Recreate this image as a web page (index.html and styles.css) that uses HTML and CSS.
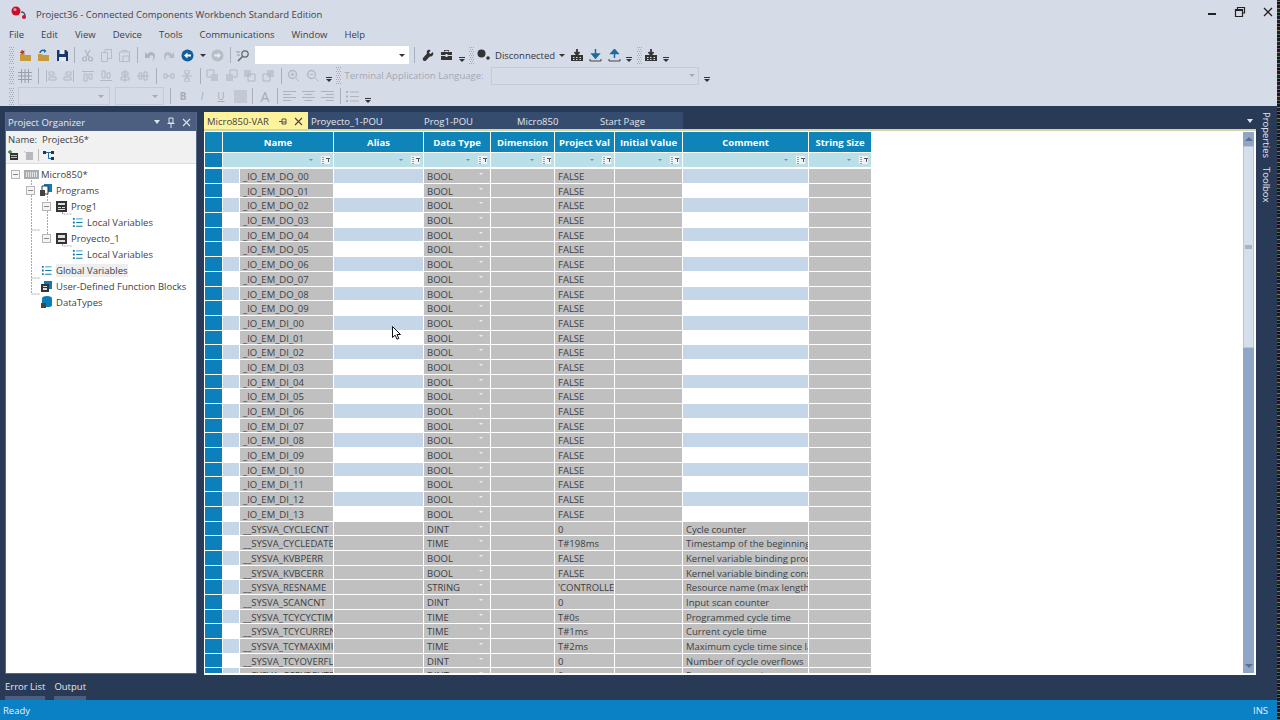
FILE: index.html
```html
<!DOCTYPE html>
<html lang="en">
<head>
<meta charset="utf-8">
<title>Project36 - Connected Components Workbench Standard Edition</title>
<link rel="stylesheet" href="styles.css">
</head>
<body>
<svg class="defs" width="0" height="0">
  <symbol id="i-list" viewBox="0 0 12 12"><path d="M1 1h2v2H1zM1 5h2v2H1zM1 9h2v2H1zM4.500 1.500h7v1h-7zM4.500 5.500h7v1h-7zM4.500 9.500h7v1h-7z" fill="#0c7cb5"/></symbol>
  <symbol id="i-grip" viewBox="0 0 5 19"><path d="M0 1h1v1H0zM2 1h1v1H2zM4 1h1v1H4zM1 3h1v1H1zM3 3h1v1H3zM0 5h1v1H0zM2 5h1v1H2zM4 5h1v1H4zM1 7h1v1H1zM3 7h1v1H3zM0 9h1v1H0zM2 9h1v1H2zM4 9h1v1H4zM1 11h1v1H1zM3 11h1v1H3zM0 13h1v1H0zM2 13h1v1H2zM4 13h1v1H4zM1 15h1v1H1zM3 15h1v1H3zM0 17h1v1H0zM2 17h1v1H2zM4 17h1v1H4z" fill="#a3a9b6"/></symbol>
  <symbol id="i-plc" viewBox="0 0 14 14"><path d="M7 1v5M4.500 4 7 7l2.500-3" fill="none" stroke="#333" stroke-width="1.800"/><path d="M1 7h12v6H1z" fill="#333"/><path d="M3 9h1.500v1H3zM6 9h1.500v1H6zM9.500 9H11v1H9.500zM3 11h1.500v1H3zM6 11h1.500v1H6zM9.500 11H11v1H9.500z" fill="#d6dbe7"/></symbol>
</svg>

<div class="noise"></div>
<div class="app">
  <header class="chrome">
    <div class="titlebar">
      <svg class="logo" width="18" height="16" viewBox="0 0 18 16"><circle cx="6" cy="6" r="4.500" fill="#c8102e"/><circle cx="5" cy="4.500" r="1.500" fill="#f08a90"/><path d="M11 7c3 0 4 2 4 4" fill="none" stroke="#555" stroke-width="1.400"/><circle cx="14" cy="12" r="2" fill="#c8102e"/></svg>
      <span class="title">Project36 - Connected Components Workbench Standard Edition</span>
      <div class="winctl">
        <svg width="12" height="12" viewBox="0 0 12 12"><path d="M2 7h8v2H2z" fill="#222"/></svg>
        <svg width="12" height="12" viewBox="0 0 12 12"><path d="M3.500 3V1.500h7V7H9M1.500 3.500h7v7h-7z" fill="none" stroke="#222" stroke-width="1.200"/><path d="M1.500 3.500h7v1.500h-7z" fill="#222"/></svg>
        <svg width="12" height="12" viewBox="0 0 12 12"><path d="M2 2l8 8M10 2l-8 8" fill="none" stroke="#222" stroke-width="1.300"/></svg>
      </div>
    </div>
    <nav class="menubar">
      <span>File</span><span>Edit</span><span>View</span><span>Device</span><span>Tools</span><span>Communications</span><span>Window</span><span>Help</span>
    </nav>

    <div class="toolbar">
      <svg class="grip" width="5" height="19"><use href="#i-grip"/></svg>
      <span class="btn first"><svg width="13" height="13" viewBox="0 0 13 13"><path d="M1 5h4l1 1h6v6H1z" fill="#c79a3d"/><path d="M3 0.500l1 1.500 1.800-.5-.8 1.700 1 1.500-2-.2-1 1.500-.6-1.800-1.900-.6 1.600-1z" fill="#b5372a"/></svg></span>
      <span class="btn"><svg width="13" height="13" viewBox="0 0 13 13"><path d="M1 5h4l1 1h6v6H1z" fill="#c79a3d"/><path d="M3 4a3 3 0 0 1 5-2" fill="none" stroke="#1c6fa6" stroke-width="1.500"/><path d="M7 0l2.500 2L7 4z" fill="#1c6fa6"/></svg></span>
      <span class="btn"><svg width="13" height="13" viewBox="0 0 13 13"><path d="M1 1h9l2 2v9H1z" fill="#16386b"/><path d="M3.500 1h5v4h-5z" fill="#e6ebf3"/><path d="M3 8h7v4H3z" fill="#e6ebf3"/></svg></span>
      <span class="sep s1"></span>
      <span class="btn"><svg width="13" height="13" viewBox="0 0 13 13"><path d="M4 1l4 7M9 1L5 8" stroke="#aeb3bd" fill="none" stroke-width="1.200"/><circle cx="3.500" cy="10" r="2" stroke="#aeb3bd" fill="none" stroke-width="1.200"/><circle cx="9.500" cy="10" r="2" stroke="#aeb3bd" fill="none" stroke-width="1.200"/></svg></span>
      <span class="btn"><svg width="13" height="13" viewBox="0 0 13 13"><path d="M1.500 3.500h6v9h-6zM5 3.500v-3h6.500v9h-4" stroke="#b7bcc6" fill="none"/></svg></span>
      <span class="btn"><svg width="13" height="13" viewBox="0 0 13 13"><path d="M1.500 3h10v9.500h-10zM4 3V1.500h5V3M5 7h6v5.500H5z" stroke="#b7bcc6" fill="none"/></svg></span>
      <span class="sep s1"></span>
      <span class="btn"><svg width="13" height="13" viewBox="0 0 13 13"><path d="M3 5.500C5 2 11 2 11 7c0 2-1 4-3 5 1-2 2-3 1-5-1-1.500-3-1-4 1l2 1H1V3z" fill="#aeb3bd"/></svg></span>
      <span class="btn"><svg width="13" height="13" viewBox="0 0 13 13"><path d="M10 5.500C8 2 2 2 2 7c0 2 1 4 3 5-1-2-2-3-1-5 1-1.500 3-1 4 1l-2 1h6V3z" fill="#b7bcc6"/></svg></span>
      <span class="btn"><svg width="13" height="13" viewBox="0 0 13 13"><circle cx="6.500" cy="6.500" r="6" fill="#105f9a"/><path d="M3 6.500 6.500 3.500v2H10v2H6.500v2z" fill="#fff"/></svg></span>
      <span class="caret dark back"></span>
      <span class="btn tight"><svg width="13" height="13" viewBox="0 0 13 13"><circle cx="6.500" cy="6.500" r="6" fill="#b7bcc6"/><path d="M10 6.500 6.500 3.500v2H3v2h3.500v2z" fill="#e6e9f0"/></svg></span>
      <span class="sep s2"></span>
      <span class="btn"><svg width="14" height="13" viewBox="0 0 14 13"><circle cx="9" cy="5" r="3.200" fill="none" stroke="#666" stroke-width="1.200"/><path d="M6.500 7.500 2 12" stroke="#666" stroke-width="1.600"/><path d="M0 3h4M1 6h3" stroke="#999"/></svg></span>
      <span class="combo c-find"><span class="caret dark"></span></span>
      <span class="sep s3"></span>
      <span class="btn"><svg width="12" height="13" viewBox="0 0 12 13"><path d="M11 3 8.500 5 7 4l1.500-2.800C6 0 4 2 5 4.500L1 9c-1 2 1 4 3 2.500L7.800 7.500C10 8 12 6 11 3z" fill="#333"/></svg></span>
      <span class="btn"><svg width="13" height="12" viewBox="0 0 13 12"><path d="M4 3V1h5v2M1 3h11v3H1zM1 7h11v4H1z" fill="#333"/><path d="M4.500 1.800h4V3h-4z" fill="#d6dbe7"/><path d="M5.500 5h2v3h-2z" fill="#d6dbe7"/></svg></span>
      <span class="over o1"></span>
      <svg class="grip g2" width="5" height="19"><use href="#i-grip"/></svg>
      <span class="btn conn"><svg width="13" height="12" viewBox="0 0 13 12"><circle cx="4.500" cy="4.500" r="4" fill="#333"/><circle cx="11" cy="9" r="1.800" fill="#333"/></svg></span>
      <span class="disc">Disconnected</span>
      <span class="caret dark mid"></span>
      <span class="btn"><svg width="14" height="14"><use href="#i-plc"/></svg></span>
      <span class="btn"><svg width="13" height="13" viewBox="0 0 13 13"><path d="M6.500 0v8M3 5l3.500 4L10 5z" stroke="#1a6d9c" fill="#1a6d9c" stroke-width="1.500"/><path d="M1 10v2h11v-2" fill="none" stroke="#444"/></svg></span>
      <span class="btn"><svg width="13" height="13" viewBox="0 0 13 13"><path d="M6.500 9V2M3 4.500l3.500-4 3.500 4z" stroke="#1a6d9c" fill="#1a6d9c" stroke-width="1.500"/><path d="M1 10v2h11v-2" fill="none" stroke="#444"/></svg></span>
      <span class="over o4"></span>
      <svg class="grip g3" width="5" height="19"><use href="#i-grip"/></svg>
      <span class="btn"><svg width="14" height="14"><use href="#i-plc"/></svg></span>
      <span class="over o4"></span>
    </div>

    <div class="toolbar">
      <svg class="grip" width="5" height="19"><use href="#i-grip"/></svg>
      <span class="btn first"><svg width="14" height="14" viewBox="0 0 14 14"><path d="M3.500 0v14M7 0v14M10.500 0v14M0 3.500h14M0 7h14M0 10.500h14" stroke="#9aa0ab"/></svg></span>
      <span class="sep s4"></span>
      <span class="btn d"><svg width="12" height="12" viewBox="0 0 12 12"><path d="M1.500 0v12M4 2h5v3H4zM4 7h7v3H4z" fill="none" stroke="#b3b8c3"/></svg></span>
      <span class="btn d"><svg width="12" height="12" viewBox="0 0 12 12"><path d="M10.500 0v12M3 2h5v3H3zM1 7h7v3H1z" fill="none" stroke="#b3b8c3"/></svg></span>
      <span class="btn d"><svg width="12" height="12" viewBox="0 0 12 12"><path d="M0 1.500h12M2 4h3v7H2zM7 4h3v5H7z" fill="none" stroke="#b3b8c3"/></svg></span>
      <span class="btn d"><svg width="12" height="12" viewBox="0 0 12 12"><path d="M0 10.500h12M2 1h3v7H2zM7 3h3v5H7z" fill="none" stroke="#b3b8c3"/></svg></span>
      <span class="btn d"><svg width="12" height="12" viewBox="0 0 12 12"><path d="M6 0v12M3 2h6v3H3zM2 7h8v3H2z" fill="none" stroke="#b3b8c3"/></svg></span>
      <span class="btn d"><svg width="12" height="12" viewBox="0 0 12 12"><path d="M0 6h12M2 3h3v6H2zM7 2h3v8H7z" fill="none" stroke="#b3b8c3"/></svg></span>
      <span class="sep s4"></span>
      <span class="btn d"><svg width="12" height="12" viewBox="0 0 12 12"><path d="M1 4h3v4H1zM8 4h3v4H8zM4 6h4" fill="none" stroke="#b3b8c3"/></svg></span>
      <span class="btn d"><svg width="12" height="12" viewBox="0 0 12 12"><path d="M4 0h4v4H4zM4 8h4v4H4zM6 4v4M1 6h10" fill="none" stroke="#b3b8c3"/></svg></span>
      <span class="sep s4"></span>
      <span class="btn d"><svg width="13" height="13" viewBox="0 0 13 13"><path d="M1 1h7v7H1z" fill="none" stroke="#b3b8c3"/><path d="M5 5h7v7H5z" fill="#c0c5cf"/></svg></span>
      <span class="btn d"><svg width="13" height="13" viewBox="0 0 13 13"><path d="M5 1h7v7H5z" fill="none" stroke="#b3b8c3"/><path d="M1 5h7v7H1z" fill="#c0c5cf"/></svg></span>
      <span class="btn d"><svg width="13" height="13" viewBox="0 0 13 13"><path d="M1 1h7v7H1z" fill="#c0c5cf"/><path d="M5 5h7v7H5z" fill="none" stroke="#b3b8c3"/></svg></span>
      <span class="btn d"><svg width="13" height="13" viewBox="0 0 13 13"><path d="M5 1h7v7H5z" fill="#c0c5cf"/><path d="M1 5h7v7H1z" fill="none" stroke="#b3b8c3"/></svg></span>
      <span class="sep s4"></span>
      <span class="btn d"><svg width="13" height="13" viewBox="0 0 13 13"><circle cx="5.500" cy="5.500" r="4" fill="none" stroke="#b3b8c3" stroke-width="1.300"/><path d="M8.500 8.500 12 12M3.500 5.500h4M5.500 3.500v4" stroke="#b3b8c3"/></svg></span>
      <span class="btn d"><svg width="13" height="13" viewBox="0 0 13 13"><circle cx="5.500" cy="5.500" r="4" fill="none" stroke="#b3b8c3" stroke-width="1.300"/><path d="M8.500 8.500 12 12M3.500 5.500h4" stroke="#b3b8c3"/></svg></span>
      <span class="over o5"></span>
      <svg class="grip g4" width="5" height="19"><use href="#i-grip"/></svg>
      <span class="dim-label">Terminal Application Language:</span>
      <span class="combo c-lang"><span class="caret"></span></span>
      <span class="over o2"></span>
    </div>

    <div class="toolbar">
      <svg class="grip" width="5" height="19"><use href="#i-grip"/></svg>
      <span class="combo c-font"><span class="caret"></span></span>
      <span class="combo c-size"><span class="caret"></span></span>
      <span class="sep s5"></span>
      <span class="glyph b">B</span><span class="glyph i">I</span><span class="glyph u">U</span>
      <span class="glyph"><svg width="13" height="13" viewBox="0 0 13 13"><path d="M0 0h13v13H0z" fill="#c3c8d2"/></svg></span>
      <span class="sep s6"></span>
      <span class="glyph big">A</span>
      <span class="sep s7"></span>
      <span class="glyph"><svg width="13" height="11" viewBox="0 0 13 11"><path d="M0 .5h13M0 3.500h8M0 6.500h13M0 9.500h8" stroke="#aeb3bd"/></svg></span>
      <span class="glyph"><svg width="13" height="11" viewBox="0 0 13 11"><path d="M0 .5h13M2.500 3.500h8M0 6.500h13M2.500 9.500h8" stroke="#aeb3bd"/></svg></span>
      <span class="glyph"><svg width="13" height="11" viewBox="0 0 13 11"><path d="M0 .5h13M5 3.500h8M0 6.500h13M5 9.500h8" stroke="#aeb3bd"/></svg></span>
      <span class="sep s8"></span>
      <span class="glyph"><svg width="13" height="11" viewBox="0 0 13 11"><path d="M0 0h2v2H0zM0 4.500h2v2H0zM0 9h2v2H0zM4 .5h9v1H4zM4 5h9v1H4zM4 9.500h9v1H4z" fill="#aeb3bd"/></svg></span>
      <span class="over o3"></span>
    </div>
  </header>

  <main class="workspace">
    <aside class="organizer">
      <div class="pane-head">
        <span>Project Organizer</span>
        <span class="pane-ctl">
          <span class="tri"></span>
          <svg width="10" height="11" viewBox="0 0 10 11"><path d="M3 1h4v5H3zM1.500 6.500h7M5 6.500V11" fill="none" stroke="#dfe5ef"/></svg>
          <svg width="9" height="9" viewBox="0 0 9 9"><path d="M1 1l7 7M8 1 1 8" stroke="#dfe5ef" stroke-width="1.100"/></svg>
        </span>
      </div>
      <div class="org-name">Name:&nbsp; Project36*</div>
      <div class="org-tools">
        <svg width="11" height="11" viewBox="0 0 11 11"><path d="M2 3h8v7H2z" fill="#333"/><path d="M3 5h6v1H3zM3 7h6v1H3z" fill="#bbb"/><path d="M2 0v4M0 2h4" stroke="#2b8a3e" stroke-width="1.300"/></svg>
        <svg width="11" height="11" viewBox="0 0 11 11"><path d="M3 2h7v8H3z" fill="#b5b8bd"/><path d="M1 1l3 3" stroke="#c5c8cd"/></svg>
        <span class="org-sep"></span>
        <svg width="11" height="11" viewBox="0 0 11 11"><path d="M0 1h3v3H0zM8 1h3v3H8zM8 7h3v3H8z" fill="#333"/><path d="M3 2.500h5M5.500 2.500v6h2.500" stroke="#1c6fa6" fill="none"/></svg>
      </div>
      <div class="tree">
        <svg class="tree-lines" width="70" height="140" viewBox="0 0 70 140"><path d="M20.500 8v120M20.500 64h9M20.500 112h9M20.500 128h9M36.500 24v52M51.500 40v8h9M51.500 72v8h9" fill="none" stroke="#a8a8a8" stroke-dasharray="2 1"/></svg>
        <div class="node l0"><span class="exp"></span><svg class="ni wide" width="15" height="9" viewBox="0 0 15 9"><path d="M0 0h15v9H0z" fill="#a9adb2"/><path d="M2 2h1v5H2zM4 2h1v5H4zM6 2h1v5H6zM8 2h1v5H8zM10 2h1v5h-1zM12 2h1v5h-1z" fill="#e3e5e8"/></svg><span>Micro850*</span></div>
        <div class="node l1"><span class="exp"></span><svg class="ni" width="12" height="12" viewBox="0 0 12 12"><path d="M4 0h8v8H4z" fill="#0c7cb5"/><path d="M2 2h6v8H2z" fill="#fff" stroke="#333"/><path d="M0 6h5v6H0z" fill="#444"/></svg><span>Programs</span></div>
        <div class="node l2"><span class="exp"></span><svg class="ni" width="11" height="11" viewBox="0 0 11 11"><path d="M0 0h11v11H0z" fill="#333"/><path d="M2 2h7v2H2zM2 6h3v1H2zM6 6h3v1H6zM2 8h7v1H2z" fill="#ddd"/></svg><span>Prog1</span></div>
        <div class="node l3"><svg class="ni" width="11" height="11"><use href="#i-list"/></svg><span>Local Variables</span></div>
        <div class="node l2"><span class="exp"></span><svg class="ni" width="11" height="11" viewBox="0 0 11 11"><path d="M0 0h11v11H0z" fill="#333"/><path d="M2 2h7v3H2zM2 7h7v2H2z" fill="#ddd"/></svg><span>Proyecto_1</span></div>
        <div class="node l3"><svg class="ni" width="11" height="11"><use href="#i-list"/></svg><span>Local Variables</span></div>
        <div class="node l1n"><svg class="ni" width="11" height="11"><use href="#i-list"/></svg><span class="hl">Global Variables</span></div>
        <div class="node l1n"><svg class="ni" width="11" height="11" viewBox="0 0 11 11"><path d="M3 0h8v8H3z" fill="#0c7cb5"/><path d="M0 3h8v8H0z" fill="#333"/><path d="M2 5h4v1H2zM2 7h4v2H2z" fill="#ddd"/></svg><span>User-Defined Function Blocks</span></div>
        <div class="node l1n"><svg class="ni" width="11" height="12" viewBox="0 0 11 12"><ellipse cx="6" cy="2.500" rx="5" ry="2.500" fill="#0c7cb5"/><path d="M1 2.500v7c0 2 10 2 10 0v-7c0 2-10 2-10 0z" fill="#0c7cb5"/><path d="M0 7h5v5H0z" fill="#444"/></svg><span>DataTypes</span></div>
      </div>
    </aside>

    <section class="docs">
      <div class="tabs">
        <div class="tab active"><span>Micro850-VAR</span>
          <svg width="10" height="9" viewBox="0 0 10 9"><path d="M1 4.500h3M4 2h4v5H4zM4 5h4" fill="none" stroke="#555"/></svg>
          <svg width="9" height="9" viewBox="0 0 9 9"><path d="M1 1l7 7M8 1 1 8" stroke="#444" stroke-width="1.100"/></svg>
        </div>
        <div class="tabgroup">
          <span class="t1">Proyecto_1-POU</span><span class="t2">Prog1-POU</span><span class="t3">Micro850</span><span>Start Page</span>
        </div>
        <span class="tab-menu"></span>
      </div>
      <div class="doc">
        <div class="sheet">
          <div class="grid-wrap">
            <div class="row head"><div class="sel"></div><div class="hname">Name</div><div>Alias</div><div>Data Type</div><div>Dimension</div><div>Project Val</div><div>Initial Value</div><div>Comment</div><div>String Size</div></div>
            <div class="row filter"><div class="sel"></div><div class="hname"><i></i><b></b></div><div><i></i><b></b></div><div><i></i><b></b></div><div><i></i><b></b></div><div><i></i><b></b></div><div><i></i><b></b></div><div><i></i><b></b></div><div><i></i><b></b></div></div>

            <div class="row b"><div class="sel"></div><div class="mk"></div><div class="g">_IO_EM_DO_00</div><div class="e"></div><div class="g t">BOOL</div><div class="g"></div><div class="g">FALSE</div><div class="g"></div><div class="e"></div><div class="g"></div></div>
            <div class="row w"><div class="sel"></div><div class="mk"></div><div class="g">_IO_EM_DO_01</div><div class="e"></div><div class="g t">BOOL</div><div class="g"></div><div class="g">FALSE</div><div class="g"></div><div class="e"></div><div class="g"></div></div>
            <div class="row b"><div class="sel"></div><div class="mk"></div><div class="g">_IO_EM_DO_02</div><div class="e"></div><div class="g t">BOOL</div><div class="g"></div><div class="g">FALSE</div><div class="g"></div><div class="e"></div><div class="g"></div></div>
            <div class="row w"><div class="sel"></div><div class="mk"></div><div class="g">_IO_EM_DO_03</div><div class="e"></div><div class="g t">BOOL</div><div class="g"></div><div class="g">FALSE</div><div class="g"></div><div class="e"></div><div class="g"></div></div>
            <div class="row b"><div class="sel"></div><div class="mk"></div><div class="g">_IO_EM_DO_04</div><div class="e"></div><div class="g t">BOOL</div><div class="g"></div><div class="g">FALSE</div><div class="g"></div><div class="e"></div><div class="g"></div></div>
            <div class="row w"><div class="sel"></div><div class="mk"></div><div class="g">_IO_EM_DO_05</div><div class="e"></div><div class="g t">BOOL</div><div class="g"></div><div class="g">FALSE</div><div class="g"></div><div class="e"></div><div class="g"></div></div>
            <div class="row b"><div class="sel"></div><div class="mk"></div><div class="g">_IO_EM_DO_06</div><div class="e"></div><div class="g t">BOOL</div><div class="g"></div><div class="g">FALSE</div><div class="g"></div><div class="e"></div><div class="g"></div></div>
            <div class="row w"><div class="sel"></div><div class="mk"></div><div class="g">_IO_EM_DO_07</div><div class="e"></div><div class="g t">BOOL</div><div class="g"></div><div class="g">FALSE</div><div class="g"></div><div class="e"></div><div class="g"></div></div>
            <div class="row b"><div class="sel"></div><div class="mk"></div><div class="g">_IO_EM_DO_08</div><div class="e"></div><div class="g t">BOOL</div><div class="g"></div><div class="g">FALSE</div><div class="g"></div><div class="e"></div><div class="g"></div></div>
            <div class="row w"><div class="sel"></div><div class="mk"></div><div class="g">_IO_EM_DO_09</div><div class="e"></div><div class="g t">BOOL</div><div class="g"></div><div class="g">FALSE</div><div class="g"></div><div class="e"></div><div class="g"></div></div>
            <div class="row b"><div class="sel"></div><div class="mk"></div><div class="g">_IO_EM_DI_00</div><div class="e"></div><div class="g t">BOOL</div><div class="g"></div><div class="g">FALSE</div><div class="g"></div><div class="e"></div><div class="g"></div></div>
            <div class="row w"><div class="sel"></div><div class="mk"></div><div class="g">_IO_EM_DI_01</div><div class="e"></div><div class="g t">BOOL</div><div class="g"></div><div class="g">FALSE</div><div class="g"></div><div class="e"></div><div class="g"></div></div>
            <div class="row b"><div class="sel"></div><div class="mk"></div><div class="g">_IO_EM_DI_02</div><div class="e"></div><div class="g t">BOOL</div><div class="g"></div><div class="g">FALSE</div><div class="g"></div><div class="e"></div><div class="g"></div></div>
            <div class="row w"><div class="sel"></div><div class="mk"></div><div class="g">_IO_EM_DI_03</div><div class="e"></div><div class="g t">BOOL</div><div class="g"></div><div class="g">FALSE</div><div class="g"></div><div class="e"></div><div class="g"></div></div>
            <div class="row b"><div class="sel"></div><div class="mk"></div><div class="g">_IO_EM_DI_04</div><div class="e"></div><div class="g t">BOOL</div><div class="g"></div><div class="g">FALSE</div><div class="g"></div><div class="e"></div><div class="g"></div></div>
            <div class="row w"><div class="sel"></div><div class="mk"></div><div class="g">_IO_EM_DI_05</div><div class="e"></div><div class="g t">BOOL</div><div class="g"></div><div class="g">FALSE</div><div class="g"></div><div class="e"></div><div class="g"></div></div>
            <div class="row b"><div class="sel"></div><div class="mk"></div><div class="g">_IO_EM_DI_06</div><div class="e"></div><div class="g t">BOOL</div><div class="g"></div><div class="g">FALSE</div><div class="g"></div><div class="e"></div><div class="g"></div></div>
            <div class="row w"><div class="sel"></div><div class="mk"></div><div class="g">_IO_EM_DI_07</div><div class="e"></div><div class="g t">BOOL</div><div class="g"></div><div class="g">FALSE</div><div class="g"></div><div class="e"></div><div class="g"></div></div>
            <div class="row b"><div class="sel"></div><div class="mk"></div><div class="g">_IO_EM_DI_08</div><div class="e"></div><div class="g t">BOOL</div><div class="g"></div><div class="g">FALSE</div><div class="g"></div><div class="e"></div><div class="g"></div></div>
            <div class="row w"><div class="sel"></div><div class="mk"></div><div class="g">_IO_EM_DI_09</div><div class="e"></div><div class="g t">BOOL</div><div class="g"></div><div class="g">FALSE</div><div class="g"></div><div class="e"></div><div class="g"></div></div>
            <div class="row b"><div class="sel"></div><div class="mk"></div><div class="g">_IO_EM_DI_10</div><div class="e"></div><div class="g t">BOOL</div><div class="g"></div><div class="g">FALSE</div><div class="g"></div><div class="e"></div><div class="g"></div></div>
            <div class="row w"><div class="sel"></div><div class="mk"></div><div class="g">_IO_EM_DI_11</div><div class="e"></div><div class="g t">BOOL</div><div class="g"></div><div class="g">FALSE</div><div class="g"></div><div class="e"></div><div class="g"></div></div>
            <div class="row b"><div class="sel"></div><div class="mk"></div><div class="g">_IO_EM_DI_12</div><div class="e"></div><div class="g t">BOOL</div><div class="g"></div><div class="g">FALSE</div><div class="g"></div><div class="e"></div><div class="g"></div></div>
            <div class="row w"><div class="sel"></div><div class="mk"></div><div class="g">_IO_EM_DI_13</div><div class="e"></div><div class="g t">BOOL</div><div class="g"></div><div class="g">FALSE</div><div class="g"></div><div class="e"></div><div class="g"></div></div>
            <div class="row b"><div class="sel"></div><div class="mk"></div><div class="g">__SYSVA_CYCLECNT</div><div class="g"></div><div class="g t">DINT</div><div class="g"></div><div class="g">0</div><div class="g"></div><div class="g">Cycle counter</div><div class="g"></div></div>
            <div class="row w"><div class="sel"></div><div class="mk"></div><div class="g">__SYSVA_CYCLEDATE</div><div class="g"></div><div class="g t">TIME</div><div class="g"></div><div class="g">T#198ms</div><div class="g"></div><div class="g">Timestamp of the beginning</div><div class="g"></div></div>
            <div class="row b"><div class="sel"></div><div class="mk"></div><div class="g">__SYSVA_KVBPERR</div><div class="g"></div><div class="g t">BOOL</div><div class="g"></div><div class="g">FALSE</div><div class="g"></div><div class="g">Kernel variable binding process</div><div class="g"></div></div>
            <div class="row w"><div class="sel"></div><div class="mk"></div><div class="g">__SYSVA_KVBCERR</div><div class="g"></div><div class="g t">BOOL</div><div class="g"></div><div class="g">FALSE</div><div class="g"></div><div class="g">Kernel variable binding consumer</div><div class="g"></div></div>
            <div class="row b"><div class="sel"></div><div class="mk"></div><div class="g">__SYSVA_RESNAME</div><div class="g"></div><div class="g t">STRING</div><div class="g"></div><div class="g">'CONTROLLER'</div><div class="g"></div><div class="g">Resource name (max length)</div><div class="g"></div></div>
            <div class="row w"><div class="sel"></div><div class="mk"></div><div class="g">__SYSVA_SCANCNT</div><div class="g"></div><div class="g t">DINT</div><div class="g"></div><div class="g">0</div><div class="g"></div><div class="g">Input scan counter</div><div class="g"></div></div>
            <div class="row b"><div class="sel"></div><div class="mk"></div><div class="g">__SYSVA_TCYCYCTIME</div><div class="g"></div><div class="g t">TIME</div><div class="g"></div><div class="g">T#0s</div><div class="g"></div><div class="g">Programmed cycle time</div><div class="g"></div></div>
            <div class="row w"><div class="sel"></div><div class="mk"></div><div class="g">__SYSVA_TCYCURRENT</div><div class="g"></div><div class="g t">TIME</div><div class="g"></div><div class="g">T#1ms</div><div class="g"></div><div class="g">Current cycle time</div><div class="g"></div></div>
            <div class="row b"><div class="sel"></div><div class="mk"></div><div class="g">__SYSVA_TCYMAXIMUM</div><div class="g"></div><div class="g t">TIME</div><div class="g"></div><div class="g">T#2ms</div><div class="g"></div><div class="g">Maximum cycle time since last</div><div class="g"></div></div>
            <div class="row w"><div class="sel"></div><div class="mk"></div><div class="g">__SYSVA_TCYOVERFLOW</div><div class="g"></div><div class="g t">DINT</div><div class="g"></div><div class="g">0</div><div class="g"></div><div class="g">Number of cycle overflows</div><div class="g"></div></div>
            <div class="row b"><div class="sel"></div><div class="mk"></div><div class="g">__SYSVA_CCEXECUTE</div><div class="g"></div><div class="g t">DINT</div><div class="g"></div><div class="g">0</div><div class="g"></div><div class="g">Power-up execution</div><div class="g"></div></div>
          </div>
          <div class="vscroll">
            <div class="sb-btn"><span class="up"></span></div>
            <div class="sb-thumb"></div>
            <div class="sb-track"></div>
            <div class="sb-btn"><span class="down"></span></div>
          </div>
        </div>
      </div>
    </section>

    <aside class="siderail"><span>Properties</span><span>Toolbox</span></aside>
  </main>

  <div class="bottom-tabs"><span class="bt">Error List</span><span class="bt">Output</span></div>
  <footer class="status"><span>Ready</span><span>INS</span></footer>
</div>
<svg class="cursor" width="9" height="14" viewBox="0 0 9 14"><path d="M.5.500v11l2.700-2.300 1.800 4 1.800-.8-1.800-3.900H8.500z" fill="#fff" stroke="#111"/></svg>
</body>
</html>
```
FILE: styles.css
```css
* { box-sizing: border-box; }
html, body { margin: 0; height: 100%; overflow: hidden; }
body { font-family: "Open Sans", "Noto Sans", "Liberation Sans", sans-serif; font-size: 9.500px; color: #3c3f45; background: #293a56; }
.defs { position: absolute; }
.noise { position: absolute; top: 0; right: 0; width: 3px; height: 720px; z-index: 5;
  background:
    repeating-linear-gradient(0deg, #6b4a6e 0 1px, #111 1px 3px, #3f7a5c 3px 4px, #222 4px 7px, #8a7a3c 7px 8px, #1a1a2a 8px 11px);
}
.app { width: 1277px; height: 720px; display: flex; flex-direction: column; }

/* Top chrome */
.chrome { height: 106px; background: #d6dbe8; display: flex; flex-direction: column; flex: none; }
.titlebar { height: 28px; display: flex; align-items: center; padding-left: 10px; flex: none; }
.logo { margin-top: -3px; }
.title { margin-left: 8px; color: #3f434a; }
.winctl { margin-left: auto; display: flex; gap: 16px; padding-right: 3px; margin-top: -4px; }
.menubar { height: 18px; display: flex; align-items: center; padding-left: 9px; flex: none; margin-top: -3px; }
.menubar span { margin-right: 17px; }
.toolbar { height: 20.500px; display: flex; align-items: center; padding-left: 9px; flex: none; }
.menubar + .toolbar { margin-top: 2px; }
.grip { flex: none; }
.btn { width: 18.500px; height: 19px; display: flex; align-items: center; justify-content: center; flex: none; }
.btn.first { margin-left: 2px; }
.btn.tight { margin-left: 2.750px; }
.sep { width: 1px; height: 16px; background: #a9afbb; flex: none; }
.s1 { margin: 0 3.500px 0 2.500px; }
.s2 { margin: 0 2.500px 0 3px; }
.s3 { margin: 0 3.750px 0 5px; }
.s4 { margin: 0 3px; }
.s5 { margin: 0 2.500px 0 6px; }
.s6 { margin: 0 5px 0 2.500px; }
.s7 { margin: 0 1.500px 0 5px; }
.s8 { margin: 0 1.500px 0 3.500px; }
.caret { width: 0; height: 0; border-left: 3px solid transparent; border-right: 3px solid transparent; border-top: 3px solid #a6abb5; flex: none; }
.caret.dark { border-top-color: #333; }
.caret.back { margin-left: 3px; }
.caret.mid { margin: 0 3px 0 4px; }
.over { width: 9px; height: 19px; position: relative; flex: none; }
.over::before { content: ""; position: absolute; left: 1px; bottom: 3px; width: 0; height: 0; border-left: 3px solid transparent; border-right: 3px solid transparent; border-top: 3px solid #333; }
.over::after { content: ""; position: absolute; left: 1px; bottom: 7px; width: 6px; height: 1px; background: #333; }
.o1 { margin-left: 2px; }
.o2 { margin-left: 4px; }
.o3 { margin-left: 2.500px; }
.o4 { margin-left: 1.500px; }
.o5 { margin-left: 3px; }
.g2 { margin-left: 2px; }
.g3 { margin-left: 3px; }
.g4 { margin-left: 2px; }
.conn { margin-left: 1px; }
.disc { width: 60px; margin-left: 2px; color: #33373e; white-space: nowrap; }
.combo { height: 18px; display: flex; align-items: center; justify-content: flex-end; padding-right: 3px; flex: none; border: 1px solid #c6cbd6; }
.c-find { width: 154px; background: #fff; border-color: #fff; margin-left: 3px; }
.c-lang { width: 208px; margin-left: 5px; background: #d6dbe8; }
.c-font { width: 92px; margin-left: 4px; padding-right: 5px; }
.c-size { width: 49px; margin-left: 5px; padding-right: 5px; }
.dim-label { width: 141px; color: #a3a8b3; margin-left: 4px; white-space: nowrap; }
.glyph { width: 19px; display: flex; align-items: center; justify-content: center; color: #a6abb5; font-size: 10px; flex: none; }
.glyph.b { font-weight: 700; }
.glyph.i { font-style: italic; }
.glyph.u { text-decoration: underline; }
.glyph.big { font-size: 14px; width: 14px; }

/* Workspace */
.workspace { height: 568px; display: flex; flex: none; padding-top: 6px; padding-left: 5px; }
.organizer { width: 192px; height: 562px; background: #fff; display: flex; flex-direction: column; flex: none; border: 1px solid #56698c; border-top: 0; }
.pane-head { height: 19px; background: #4c5f80; color: #e6eaf2; display: flex; align-items: center; justify-content: space-between; padding: 1px 5px 0 2px; flex: none; }
.pane-ctl { display: flex; align-items: center; gap: 6px; }
.tri { width: 0; height: 0; border-left: 3.500px solid transparent; border-right: 3.500px solid transparent; border-top: 4px solid #dfe5ef; }
.org-name { height: 16px; background: #f1f1f1; padding-left: 2px; display: flex; align-items: center; color: #3c3f45; flex: none; }
.org-tools { height: 17px; background: #f1f1f1; border-bottom: 1px solid #dcdcdc; padding-left: 2px; display: flex; align-items: center; gap: 4px; flex: none; }
.org-sep { width: 1px; height: 12px; background: #bbb; }
.tree { position: relative; padding-top: 2px; flex: 1; }
.tree-lines { position: absolute; left: 5px; top: 2px; }
.node { position: relative; height: 16px; display: flex; align-items: center; white-space: nowrap; color: #3c3f45; }
.l0 { padding-left: 5px; }
.l1 { padding-left: 20px; }
.l1n { padding-left: 34px; }
.l2 { padding-left: 36px; }
.l3 { padding-left: 65px; }
.exp { width: 9px; height: 9px; border: 1px solid #b5b5b5; background: #f4f4f4 linear-gradient(#888, #888) center / 5px 1px no-repeat; flex: none; margin-right: 4px; }
.ni { flex: none; margin: 0 4px 0 1px; }
.wide { margin: 0 2px 0 0; }
.hl { background: #eeeeee; }

/* Documents */
.docs { width: 1052px; margin-left: 7px; display: flex; flex-direction: column; flex: none; }
.tabs { height: 19px; display: flex; align-items: stretch; position: relative; flex: none; border-bottom: 2px solid #d4d4a4; }
.tab.active { width: 104px; background: #fff29d; color: #3c3f45; display: flex; align-items: center; padding: 1px 0 0 3px; gap: 6px; }
.tab.active span { width: 65px; white-space: nowrap; }
.tabgroup { width: 375px; background: #364c6e; color: #e2e7ef; display: flex; align-items: center; padding: 1px 0 0 3px; white-space: nowrap; }
.t1 { width: 113px; }
.t2 { width: 93px; }
.t3 { width: 83px; }
.tab-menu { margin-left: auto; margin-right: 3px; align-self: center; width: 0; height: 0; border-left: 3.500px solid transparent; border-right: 3.500px solid transparent; border-top: 4px solid #dfe5ef; }
.doc { height: 544px; background: #fff; padding: 1px 2px 2px 1px; flex: none; }
.sheet { height: 100%; display: flex; justify-content: space-between; }
.grid-wrap { width: 667px; overflow: hidden; height: 541px; }
.row { display: grid; grid-template-columns: 17px 16px 93px 89px 66px 63px 59px 67px 125px 62px; column-gap: 1px; height: 13.700px; margin-bottom: 1px; line-height: 16px; white-space: nowrap; }
.row > div { overflow: hidden; min-width: 0; position: relative; }
.row.head, .row.filter { grid-template-columns: 17px 110px 89px 66px 63px 59px 67px 125px 62px; }
.row.head { height: 20px; line-height: 22px; margin-bottom: 1px; font-weight: 700; color: #fff; text-align: center; }
.row.head > div { background: #0e84b9; }
.row.filter { height: 14px; margin-bottom: 2px; }
.row.filter > div { background: #b9dfe9; }
.sel { background: #0b80bb; }
.row.filter > .sel { background: #0b80bb; }
.row.filter i { position: absolute; right: 20px; top: 6px; width: 0; height: 0; border-left: 2px solid transparent; border-right: 2px solid transparent; border-top: 2px solid #7f8c96; }
.row.filter b { position: absolute; right: 2px; top: 2px; width: 11px; height: 10px; background-color: #e9f5f8; background-image: linear-gradient(#555, #555), linear-gradient(#555, #555), repeating-linear-gradient(#9aa0a6 0 1px, transparent 1px 2px); background-size: 4px 1px, 1px 4px, 2px 7px; background-position: 5px 2px, 6.500px 2px, 1px 1px; background-repeat: no-repeat; border: 1px solid #c9dde3; }
.g { background: #c0c0c0; padding-left: 3px; color: #3d3f44; }
.row.b .mk, .row.b .e { background: #c5d6e9; }
.row.w .mk, .row.w .e { background: #fff; }
.t::after { content: ""; position: absolute; right: 7px; top: 4px; width: 0; height: 0; border-left: 2px solid transparent; border-right: 2px solid transparent; border-top: 2px solid #ececec; }
.vscroll { width: 11px; display: flex; flex-direction: column; flex: none; height: 541px; }
.sb-btn { height: 14px; background: #8fa6c8; display: flex; align-items: center; justify-content: center; flex: none; }
.up { border-left: 4px solid transparent; border-right: 4px solid transparent; border-bottom: 4px solid #5b6f8e; }
.down { border-left: 4px solid transparent; border-right: 4px solid transparent; border-top: 4px solid #5b6f8e; }
.sb-thumb { height: 202px; background: #d5deeb linear-gradient(#a9b2bf, #a9b2bf) center / 7px 4px no-repeat; border: 1px solid #bcc4d0; flex: none; }
.sb-track { flex: 1; background: #8fa6c8; }
.siderail { width: 21px; display: flex; flex-direction: column; align-items: center; gap: 9px; color: #e2e7ef; flex: none; }
.siderail span { writing-mode: vertical-rl; }

/* Bottom */
.bottom-tabs { height: 26px; display: flex; padding-left: 5px; gap: 9px; color: #e2e7ef; flex: none; padding-top: 6px; }
.bt { height: 20px; border-bottom: 4px solid #4c5f80; }
.status { height: 20px; background: #0a80c5; color: #e6f2fa; display: flex; align-items: center; justify-content: space-between; padding: 1px 9px 0 3px; flex: none; }
.cursor { position: absolute; left: 392px; top: 326px; }
```
